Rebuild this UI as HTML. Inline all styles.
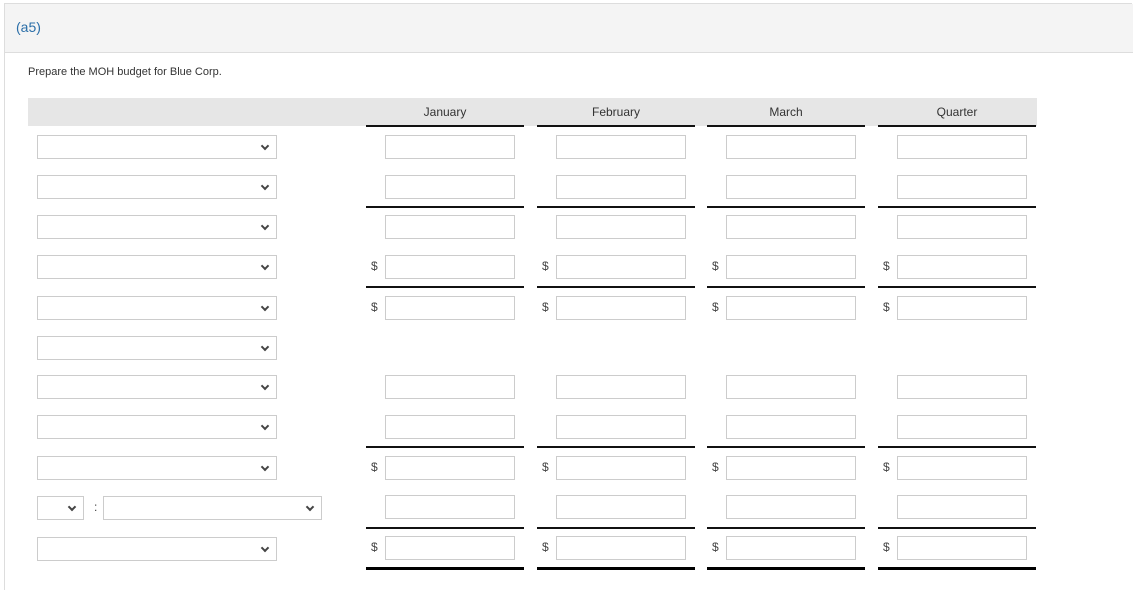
<!DOCTYPE html>
<html style="overflow:hidden;height:590px"><head><meta charset="utf-8"><style>
body{margin:0;width:1133px;height:590px;background:#fff;font-family:"Liberation Sans",sans-serif;position:relative;overflow:hidden}
.a{position:absolute}
.frame{left:4px;top:3px;width:1128px;height:587px;border-left:1px solid #ddd;border-top:1px solid #ddd;box-sizing:border-box}
.hdr{left:5px;top:4px;width:1128px;height:48px;background:#f4f4f4;border-bottom:1px solid #ddd}
.t{left:16px;top:19px;color:#2a6ea8;font-size:14px}
.p{left:28px;top:66px;font-size:11px;color:#333}
.th{left:28px;top:98px;width:1009px;height:28px;background:#e6e6e6}
.h{font-size:12px;color:#333;top:105px;width:158px;text-align:center}
.ln{height:2px;background:#111;width:158px}
.thk{height:3px;background:#000;width:158px}
.in{width:128px;height:22px;border:1px solid #ccc;background:#fff}
.s{width:238px;height:22px;border:1px solid #ccc;background:#fff}
.s::after,.ss::after{content:"";position:absolute;right:8px;top:7px;width:4px;height:4px;border-right:2px solid #444;border-bottom:2px solid #444;transform:rotate(45deg)}
.ss{height:22px;border:1px solid #ccc;background:#fff}
.d{font-size:12px;color:#444}
</style></head><body>
<div class="a frame"></div>
<div class="a hdr"></div>
<div class="a t">(a5)</div>
<div class="a p">Prepare the MOH budget for Blue Corp.</div>
<div class="a th"></div>
<div class="a h" style="left:366px">January</div>
<div class="a h" style="left:537px">February</div>
<div class="a h" style="left:707px">March</div>
<div class="a h" style="left:878px">Quarter</div>

<div class="a ln" style="left:366px;top:125px"></div><div class="a ln" style="left:537px;top:125px"></div><div class="a ln" style="left:707px;top:125px"></div><div class="a ln" style="left:878px;top:125px"></div>
<div class="a ln" style="left:366px;top:206px"></div><div class="a ln" style="left:537px;top:206px"></div><div class="a ln" style="left:707px;top:206px"></div><div class="a ln" style="left:878px;top:206px"></div>
<div class="a ln" style="left:366px;top:286px"></div><div class="a ln" style="left:537px;top:286px"></div><div class="a ln" style="left:707px;top:286px"></div><div class="a ln" style="left:878px;top:286px"></div>
<div class="a ln" style="left:366px;top:446px"></div><div class="a ln" style="left:537px;top:446px"></div><div class="a ln" style="left:707px;top:446px"></div><div class="a ln" style="left:878px;top:446px"></div>
<div class="a ln" style="left:366px;top:527px"></div><div class="a ln" style="left:537px;top:527px"></div><div class="a ln" style="left:707px;top:527px"></div><div class="a ln" style="left:878px;top:527px"></div>
<div class="a thk" style="left:366px;top:567px"></div><div class="a thk" style="left:537px;top:567px"></div><div class="a thk" style="left:707px;top:567px"></div><div class="a thk" style="left:878px;top:567px"></div>

<div class="a s" style="left:37px;top:135px"></div>
<div class="a s" style="left:37px;top:175px"></div>
<div class="a s" style="left:37px;top:215px"></div>
<div class="a s" style="left:37px;top:255px"></div>
<div class="a s" style="left:37px;top:296px"></div>
<div class="a s" style="left:37px;top:336px"></div>
<div class="a s" style="left:37px;top:375px"></div>
<div class="a s" style="left:37px;top:415px"></div>
<div class="a s" style="left:37px;top:456px"></div>
<div class="a ss" style="left:37px;top:496px;width:45px"></div>
<div class="a d" style="left:94px;top:500px">:</div>
<div class="a ss" style="left:103px;top:496px;width:217px"></div>
<div class="a s" style="left:37px;top:537px"></div>

<div class="a in" style="left:385px;top:135px"></div><div class="a in" style="left:556px;top:135px"></div><div class="a in" style="left:726px;top:135px"></div><div class="a in" style="left:897px;top:135px"></div>
<div class="a in" style="left:385px;top:175px"></div><div class="a in" style="left:556px;top:175px"></div><div class="a in" style="left:726px;top:175px"></div><div class="a in" style="left:897px;top:175px"></div>
<div class="a in" style="left:385px;top:215px"></div><div class="a in" style="left:556px;top:215px"></div><div class="a in" style="left:726px;top:215px"></div><div class="a in" style="left:897px;top:215px"></div>
<div class="a in" style="left:385px;top:255px"></div><div class="a in" style="left:556px;top:255px"></div><div class="a in" style="left:726px;top:255px"></div><div class="a in" style="left:897px;top:255px"></div>
<div class="a in" style="left:385px;top:296px"></div><div class="a in" style="left:556px;top:296px"></div><div class="a in" style="left:726px;top:296px"></div><div class="a in" style="left:897px;top:296px"></div>
<div class="a in" style="left:385px;top:375px"></div><div class="a in" style="left:556px;top:375px"></div><div class="a in" style="left:726px;top:375px"></div><div class="a in" style="left:897px;top:375px"></div>
<div class="a in" style="left:385px;top:415px"></div><div class="a in" style="left:556px;top:415px"></div><div class="a in" style="left:726px;top:415px"></div><div class="a in" style="left:897px;top:415px"></div>
<div class="a in" style="left:385px;top:456px"></div><div class="a in" style="left:556px;top:456px"></div><div class="a in" style="left:726px;top:456px"></div><div class="a in" style="left:897px;top:456px"></div>
<div class="a in" style="left:385px;top:495px"></div><div class="a in" style="left:556px;top:495px"></div><div class="a in" style="left:726px;top:495px"></div><div class="a in" style="left:897px;top:495px"></div>
<div class="a in" style="left:385px;top:536px"></div><div class="a in" style="left:556px;top:536px"></div><div class="a in" style="left:726px;top:536px"></div><div class="a in" style="left:897px;top:536px"></div>

<div class="a d" style="left:371px;top:259px">$</div><div class="a d" style="left:542px;top:259px">$</div><div class="a d" style="left:712px;top:259px">$</div><div class="a d" style="left:883px;top:259px">$</div>
<div class="a d" style="left:371px;top:300px">$</div><div class="a d" style="left:542px;top:300px">$</div><div class="a d" style="left:712px;top:300px">$</div><div class="a d" style="left:883px;top:300px">$</div>
<div class="a d" style="left:371px;top:460px">$</div><div class="a d" style="left:542px;top:460px">$</div><div class="a d" style="left:712px;top:460px">$</div><div class="a d" style="left:883px;top:460px">$</div>
<div class="a d" style="left:371px;top:540px">$</div><div class="a d" style="left:542px;top:540px">$</div><div class="a d" style="left:712px;top:540px">$</div><div class="a d" style="left:883px;top:540px">$</div>
</body></html>
